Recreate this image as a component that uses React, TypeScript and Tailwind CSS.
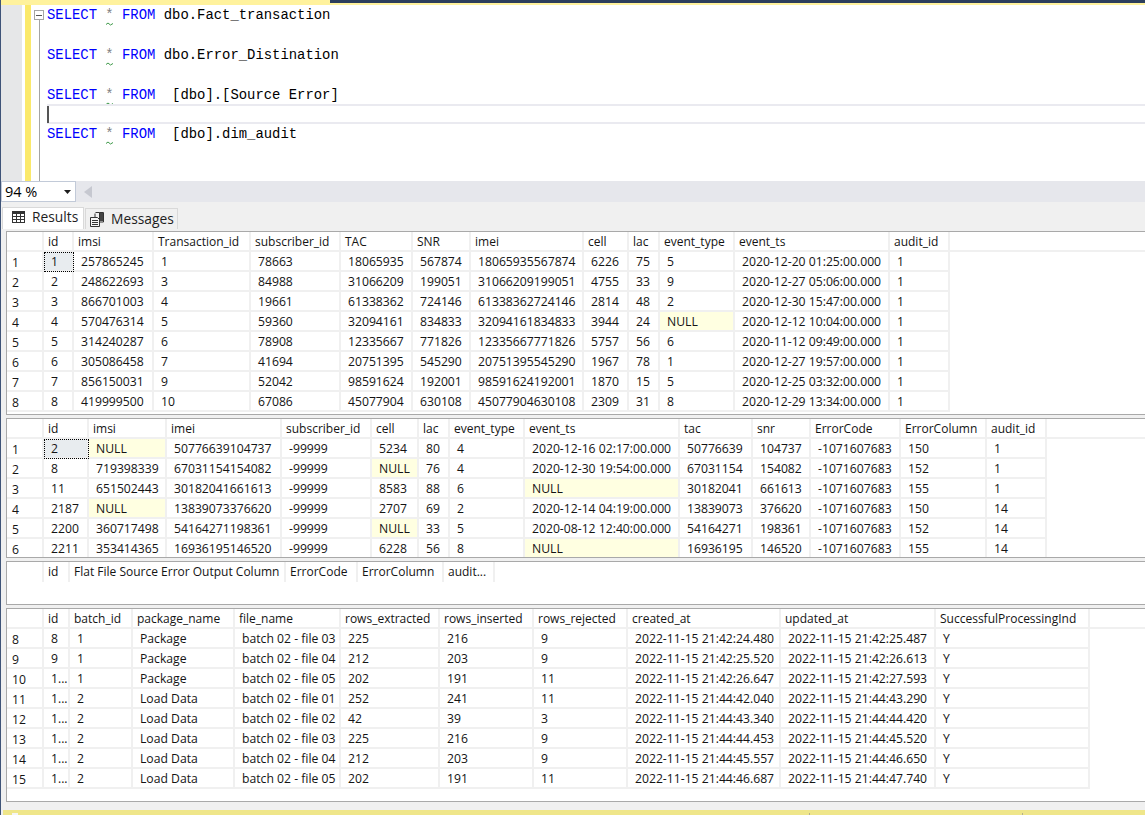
import React from 'react';

type Row = (string | number)[];
type Col = [string, number];

const NULLV = 'NULL';

const factCols: Col[] = [
  ['id', 30], ['imsi', 80], ['Transaction_id', 97], ['subscriber_id', 90], ['TAC', 72], ['SNR', 58],
  ['imei', 113], ['cell', 45], ['lac', 31], ['event_type', 75], ['event_ts', 155], ['audit_id', 60],
];

const factRows: Row[] = [
  [1, 1, 257865245, 1, 78663, 18065935, 567874, '18065935567874', 6226, 75, 5, '2020-12-20 01:25:00.000', 1],
  [2, 2, 248622693, 3, 84988, 31066209, 199051, '31066209199051', 4755, 33, 9, '2020-12-27 05:06:00.000', 1],
  [3, 3, 866701003, 4, 19661, 61338362, 724146, '61338362724146', 2814, 48, 2, '2020-12-30 15:47:00.000', 1],
  [4, 4, 570476314, 5, 59360, 32094161, 834833, '32094161834833', 3944, 24, NULLV, '2020-12-12 10:04:00.000', 1],
  [5, 5, 314240287, 6, 78908, 12335667, 771826, '12335667771826', 5757, 56, 6, '2020-11-12 09:49:00.000', 1],
  [6, 6, 305086458, 7, 41694, 20751395, 545290, '20751395545290', 1967, 78, 1, '2020-12-27 19:57:00.000', 1],
  [7, 7, 856150031, 9, 52042, 98591624, 192001, '98591624192001', 1870, 15, 5, '2020-12-25 03:32:00.000', 1],
  [8, 8, 419999500, 10, 67086, 45077904, 630108, '45077904630108', 2309, 31, 8, '2020-12-29 13:34:00.000', 1],
];

const errCols: Col[] = [
  ['id', 45], ['imsi', 78], ['imei', 115], ['subscriber_id', 90], ['cell', 47], ['lac', 31], ['event_type', 75],
  ['event_ts', 155], ['tac', 73], ['snr', 58], ['ErrorCode', 90], ['ErrorColumn', 86], ['audit_id', 60],
];

const errRows: Row[] = [
  [1, 2, NULLV, '50776639104737', -99999, 5234, 80, 4, '2020-12-16 02:17:00.000', 50776639, 104737, -1071607683, 150, 1],
  [2, 8, 719398339, '67031154154082', -99999, NULLV, 76, 4, '2020-12-30 19:54:00.000', 67031154, 154082, -1071607683, 152, 1],
  [3, 11, 651502443, '30182041661613', -99999, 8583, 88, 6, NULLV, 30182041, 661613, -1071607683, 155, 1],
  [4, 2187, NULLV, '13839073376620', -99999, 2707, 69, 2, '2020-12-14 04:19:00.000', 13839073, 376620, -1071607683, 150, 14],
  [5, 2200, 360717498, '54164271198361', -99999, NULLV, 33, 5, '2020-08-12 12:40:00.000', 54164271, 198361, -1071607683, 152, 14],
  [6, 2211, 353414365, '16936195146520', -99999, 6228, 56, 8, NULLV, 16936195, 146520, -1071607683, 155, 14],
];

const srcCols: Col[] = [
  ['id', 26], ['Flat File Source Error Output Column', 216], ['ErrorCode', 72], ['ErrorColumn', 86], ['audit...', 51],
];

const auditCols: Col[] = [
  ['id', 26], ['batch_id', 63], ['package_name', 102], ['file_name', 106], ['rows_extracted', 99], ['rows_inserted', 94],
  ['rows_rejected', 94], ['created_at', 153], ['updated_at', 155], ['SuccessfulProcessingInd', 154],
];

const auditRows: Row[] = [
  [8, 8, 1, 'Package', 'batch 02 - file 03', 225, 216, 9, '2022-11-15 21:42:24.480', '2022-11-15 21:42:25.487', 'Y'],
  [9, 9, 1, 'Package', 'batch 02 - file 04', 212, 203, 9, '2022-11-15 21:42:25.520', '2022-11-15 21:42:26.613', 'Y'],
  [10, '1...', 1, 'Package', 'batch 02 - file 05', 202, 191, 11, '2022-11-15 21:42:26.647', '2022-11-15 21:42:27.593', 'Y'],
  [11, '1...', 2, 'Load Data', 'batch 02 - file 01', 252, 241, 11, '2022-11-15 21:44:42.040', '2022-11-15 21:44:43.290', 'Y'],
  [12, '1...', 2, 'Load Data', 'batch 02 - file 02', 42, 39, 3, '2022-11-15 21:44:43.340', '2022-11-15 21:44:44.420', 'Y'],
  [13, '1...', 2, 'Load Data', 'batch 02 - file 03', 225, 216, 9, '2022-11-15 21:44:44.453', '2022-11-15 21:44:45.520', 'Y'],
  [14, '1...', 2, 'Load Data', 'batch 02 - file 04', 212, 203, 9, '2022-11-15 21:44:45.557', '2022-11-15 21:44:46.650', 'Y'],
  [15, '1...', 2, 'Load Data', 'batch 02 - file 05', 202, 191, 11, '2022-11-15 21:44:46.687', '2022-11-15 21:44:47.740', 'Y'],
];

const SqlLine = ({ rest }: { rest?: string }) => (
  <div className="relative h-[20px] whitespace-pre leading-[20px]">
    {rest !== undefined && (
      <>
        <span className="text-[#0000ff]">SELECT</span>
        <span className="text-[#808080]"> * </span>
        <span className="text-[#0000ff]">FROM</span>
        <span className="text-black">{rest}</span>
        <svg width="7" height="4" viewBox="0 0 7 4" className="absolute left-[59px] top-[17px]">
          <path d="M0 2.5 L2 1 L4.5 3 L7 1.5" fill="none" stroke="#3f9a4a" strokeWidth="1" />
        </svg>
      </>
    )}
  </div>
);

const Editor = () => (
  <div className="flex h-[176px] shrink-0 bg-white">
    <div className="w-[21px] shrink-0 bg-[#e6e7e8]" />
    <div className="w-[3px] shrink-0 bg-white" />
    <div className="w-[6px] shrink-0 bg-[#fbe96a]" />
    <div className="relative w-[16px] shrink-0">
      <div className="absolute left-[3px] top-[5px] flex h-[10px] w-[10px] items-center justify-center border border-[#a5a5a5] bg-white">
        <div className="h-px w-[6px] bg-[#555]" />
      </div>
      <div className="absolute bottom-0 left-[8px] top-[15px] w-px bg-[#a5a5a5]" />
    </div>
    <div className="relative min-w-0 flex-1 font-['Liberation_Mono',monospace] text-[13.9px]">
      <SqlLine rest=" dbo.Fact_transaction" />
      <SqlLine />
      <SqlLine rest=" dbo.Error_Distination" />
      <SqlLine />
      <SqlLine rest="  [dbo].[Source Error]" />
      <div className="relative -mt-[1px] h-[20px] border-y-2 border-[#eaeaf0]">
        <div className="absolute left-0 top-0 h-[17px] w-[2px] bg-[#555]" />
      </div>
      <SqlLine rest="  [dbo].dim_audit" />
    </div>
  </div>
);

const Zoombar = () => (
  <div className="flex h-[21px] shrink-0 items-center bg-[#e6e7ec]">
    <div className="flex h-[21px] w-[75px] items-center justify-between border border-[#c2cad8] bg-white pl-[3px] pr-[2px] text-[14.5px] text-black">
      <span>94 %</span>
      <svg width="7" height="4" viewBox="0 0 7 4" className="mr-[2px]"><path d="M0 0 H7 L3.5 4 Z" fill="#1e1e1e" /></svg>
    </div>
    <svg width="8" height="12" viewBox="0 0 8 12" className="ml-[8px]"><path d="M8 0 V12 L0 6 Z" fill="#c6c8d0" /></svg>
  </div>
);

const Tabs = () => (
  <div className="flex h-[27px] shrink-0 items-end bg-[#f0f0f0] pl-[1px] text-[13.8px] text-[#1e1e1e]">
    <div className="flex h-[22px] w-[82px] items-center gap-[7px] border border-b-0 border-[#d9d9d9] bg-white pb-[3px] pl-[9px]">
      <svg width="13" height="12" viewBox="0 0 13 12" fill="none" stroke="#333" strokeWidth="1" className="shrink-0">
        <rect x="0.5" y="0.5" width="12" height="11" />
        <path d="M0 1.5 H13 M0 2.5 H13 M0 5.5 H13 M0 8.5 H13 M4.5 2 V12 M8.5 2 V12" />
      </svg>
      <span>Results</span>
    </div>
    <div className="ml-px flex h-[21px] w-[93px] items-center gap-[7px] border border-b-0 border-[#d9d9d9] bg-[#f0f0f0] pl-[4px]">
      <svg width="14" height="15" viewBox="0 0 14 15" fill="none" stroke="#333" strokeWidth="1" className="shrink-0">
        <path d="M0.5 5.5 H7.5 L9.5 7.5 V14.5 H0.5 Z" fill="#f5f5f5" />
        <path d="M2 8.5 H8 M2 10.5 H8 M2 12.5 H8" />
        <path d="M5 1.5 V5 M5.5 0.5 H9.5 V10 H13.5 V0.5 H9.5" />
        <path d="M10 1 H13 V9 H10 Z" fill="#444" stroke="none" />
      </svg>
      <span>Messages</span>
    </div>
  </div>
);

const Grid = ({ cols, rows, className, selected, headerLine = true }: {
  cols: Col[];
  rows: Row[];
  className: string;
  selected?: boolean;
  headerLine?: boolean;
}) => (
  <div className={`shrink-0 overflow-hidden border-y border-l border-[#a9a9a9] bg-white text-[#141414] ${className}`}>
    <div className={`flex h-[20px] text-[12px] leading-[18px] ${headerLine ? 'border-b-2 border-[#f0f0f0]' : ''}`}>
      <div className="h-full w-[37px] shrink-0 border-r-2 border-[#f0f0f0]" />
      {cols.map(([n, w]) => (
        <div key={n} className="h-full shrink-0 overflow-hidden whitespace-nowrap border-r-2 border-[#f0f0f0] pl-[4px] pt-[1px]" style={{ width: w }}>{n}</div>
      ))}
    </div>
    {rows.map((r, i) => (
      <div key={i} className="flex h-[20px] text-[12.2px] leading-[18px]">
        {r.map((c, j) => {
          const sel = selected && i === 0 && j === 1;
          return (
            <div
              key={j}
              className={`shrink-0 overflow-hidden whitespace-nowrap border-b-2 border-r-2 border-[#f0f0f0] ${j === 0 ? 'pl-[5px] pt-[2px]' : 'pl-[7px] pt-[1px]'} ${c === NULLV ? 'bg-[#ffffe1]' : ''} ${sel ? 'bg-[#e8ecef] outline-1 -outline-offset-1 outline-dotted outline-black' : ''}`}
              style={{ width: j === 0 ? 37 : cols[j - 1][1] }}
            >
              {c}
            </div>
          );
        })}
      </div>
    ))}
  </div>
);

const App: React.FC = () => {
  return (
    <div className="flex h-[815px] w-[1145px] flex-col overflow-hidden border-l border-[#3f5478] bg-[#f0f0f0] font-['Open_Sans',sans-serif]">
      <div className="flex h-[5px] shrink-0">
        <div className="w-[329px] bg-[#fff29d]" />
        <div className="flex flex-1 flex-col">
          <div className="h-[3px] bg-[#2c3e5c]" />
          <div className="h-[2px] bg-[#fff29d]" />
        </div>
      </div>
      <Editor />
      <Zoombar />
      <Tabs />
      <div className="flex min-h-0 flex-1 flex-col gap-[3px] pl-[5px] pt-[2px]">
        <Grid cols={factCols} rows={factRows} className="h-[184px]" selected />
        <Grid cols={errCols} rows={errRows} className="h-[140px]" selected />
        <Grid cols={srcCols} rows={[]} className="h-[44px]" headerLine={false} />
        <Grid cols={auditCols} rows={auditRows} className="h-[194px]" />
      </div>
      <div className="ml-[2px] flex h-[5px] shrink-0 items-end bg-[#efe68a] pl-[9px]">
        <div className="h-[2px] w-[6px] bg-[#f5f5f5]" />
        <div className="ml-[791px] h-[2px] w-px bg-[#b5b08a]" />
        <div className="ml-[212px] h-[2px] w-px bg-[#b5b08a]" />
      </div>
    </div>
  );
};

export default App;
